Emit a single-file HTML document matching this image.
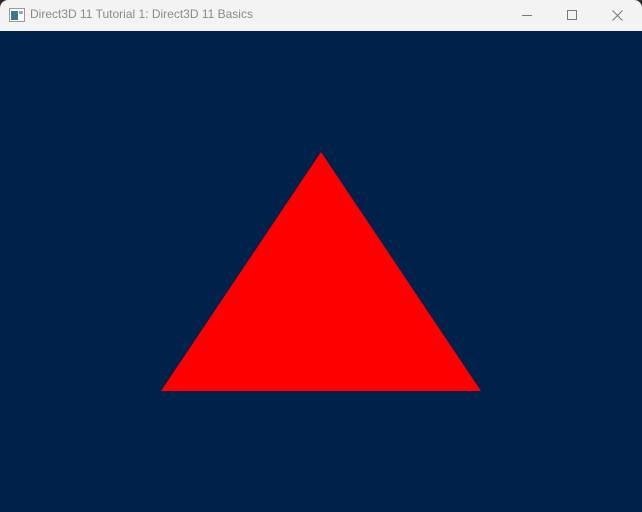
<!DOCTYPE html>
<html><head><style>
html,body{margin:0;padding:0;width:642px;height:512px;overflow:hidden;background:#2b2b2b;}
.win{position:absolute;left:0;top:0;width:642px;height:512px;background:#00214a;border-radius:8px 8px 0 0;overflow:hidden;}
.tb{position:absolute;left:0;top:0;width:642px;height:31px;background:#f3f3f3;}
.t{position:absolute;left:30px;top:7px;font:12px "Liberation Sans",sans-serif;color:#8a8a8a;}
</style></head><body>
<div class="win">
<div class="tb">
<svg style="position:absolute;left:9px;top:8px" width="16" height="14" viewBox="0 0 16 14">
<rect x="0.5" y="0.5" width="15" height="13" fill="#fff" stroke="#999"/>
<rect x="2" y="3" width="7" height="9" fill="#3a7a8a"/>
<rect x="10" y="3" width="4" height="3" fill="#9ab"/>
</svg>
<div class="t">Direct3D 11 Tutorial 1: Direct3D 11 Basics</div>
<svg style="position:absolute;left:500px;top:0" width="142" height="31">
<line x1="22" y1="15.5" x2="32" y2="15.5" stroke="#777" stroke-width="1"/>
<rect x="67.5" y="10.5" width="9" height="9" fill="none" stroke="#777"/>
<line x1="112.5" y1="10.5" x2="122.5" y2="20.5" stroke="#777"/>
<line x1="122.5" y1="10.5" x2="112.5" y2="20.5" stroke="#777"/>
</svg>
</div>
<svg style="position:absolute;left:0;top:0" width="642" height="512">
<polygon points="321,152 481,391 161,391" fill="#ff0000"/>
</svg>
</div>
</body></html>
